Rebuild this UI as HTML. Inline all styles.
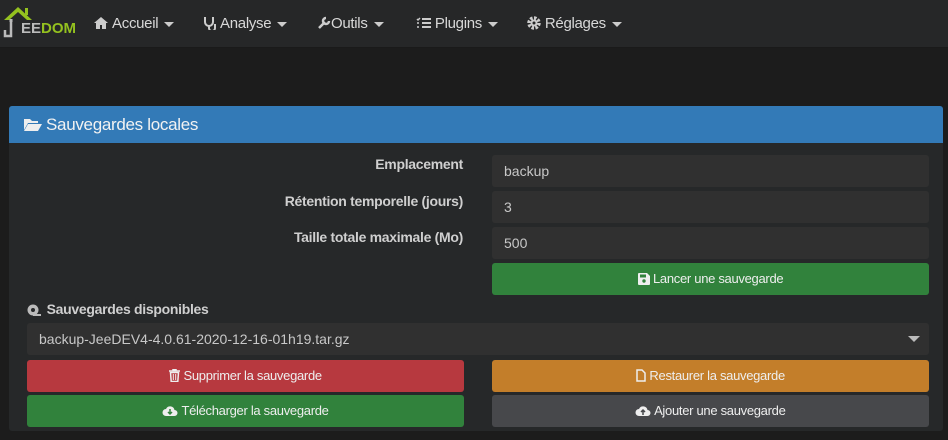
<!DOCTYPE html>
<html><head><meta charset="utf-8"><style>
*{box-sizing:border-box;margin:0;padding:0}
body{width:948px;height:440px;overflow:hidden;background:#1c1c1c;font-family:"Liberation Sans",sans-serif;color:#ddd;position:relative}
.nav{position:absolute;left:0;top:0;width:948px;height:48px;background:#262728;border-bottom:1px solid #1a1a1a}
.ni{position:absolute;top:15px;font-size:15px;color:#d8d8d8;white-space:nowrap;letter-spacing:-0.3px}
.caret{display:inline-block;width:0;height:0;border-left:5px solid transparent;border-right:5px solid transparent;border-top:5px solid #ccc;vertical-align:middle;margin-left:6px}
.panel{position:absolute;left:9px;top:106px;width:934px;height:325px;background:#262829;border-radius:3px}
.ph{height:37px;background:#337ab7;border-radius:3px 3px 0 0;color:#f2f2f2;font-size:17px;padding:9px 0 0 37px;position:relative;letter-spacing:-0.3px}
.lbl{position:absolute;right:480px;font-size:14px;font-weight:bold;color:#cfcfcf;letter-spacing:-0.3px}
.inp{position:absolute;left:483px;width:437px;height:32px;background:#303030;border-radius:3px;color:#c8c8c8;font-size:14px;padding:8px 0 0 12px}
.btn{position:absolute;height:32px;border-radius:3px;color:#eee;font-size:13px;text-align:center;padding-top:8px;letter-spacing:-0.3px}
svg{vertical-align:-2px}
</style></head><body>
<div class="nav">
 <svg style="position:absolute;left:3px;top:4px" width="30" height="34" viewBox="0 0 30 34"><path d="M1 16 L15 3 L29 16 L24 16 L15 8 L6 16Z" fill="#94c11f"/><rect x="22" y="4" width="3" height="7" fill="#94c11f"/><path d="M8 17 v15 h-6 v-6" stroke="#bbb" stroke-width="2.5" fill="none"/><rect x="6.5" y="15" width="3" height="3" fill="#bbb"/></svg>
 <div style="position:absolute;left:21px;top:20px;font-size:15px;font-weight:bold;letter-spacing:0"><span style="color:#bbb">EE</span><span style="color:#94c11f">DOM</span></div>
 <div class="ni" style="left:93px"><svg width="16" height="14" viewBox="0 0 16 14"><path d="M8 1 L1 7 h2 v6 h4 v-4 h2 v4 h4 v-6 h2Z" fill="#ccc"/></svg> Accueil<span class="caret"></span></div>
 <div class="ni" style="left:203px"><svg width="14" height="14" viewBox="0 0 14 14"><path d="M2 1 v5 a4 4 0 0 0 8 0 v-5 M6 10 v2 a3 3 0 0 0 6 0 v-4" stroke="#ccc" stroke-width="2" fill="none"/></svg> Analyse<span class="caret"></span></div>
 <div class="ni" style="left:317px"><svg width="14" height="14" viewBox="0 0 14 14"><path d="M2 12 L8 6 M9 2 a3 3 0 1 0 3 3" stroke="#ccc" stroke-width="2.5" fill="none"/></svg>Outils<span class="caret"></span></div>
 <div class="ni" style="left:416px"><svg width="15" height="14" viewBox="0 0 15 14"><path d="M6 3h9M6 7h9M6 11h9" stroke="#ccc" stroke-width="2"/><path d="M1 3l1 1 2-2M1 7h2M1 11h2" stroke="#ccc" stroke-width="1.5" fill="none"/></svg> Plugins<span class="caret"></span></div>
 <div class="ni" style="left:527px"><svg width="14" height="14" viewBox="0 0 14 14"><circle cx="7" cy="7" r="5" fill="none" stroke="#ccc" stroke-width="3.5" stroke-dasharray="2.5 1.4"/><circle cx="7" cy="7" r="3.5" fill="#ccc"/><circle cx="7" cy="7" r="1.5" fill="#262728"/></svg> Réglages<span class="caret"></span></div>
</div>
<div class="panel">
 <div class="ph"><svg style="position:absolute;left:15px;top:12px" width="18" height="14" viewBox="0 0 18 14"><path d="M0 1h6l2 2h6v2H4L0 12Z M4 6h14l-4 7H0Z" fill="#eee"/></svg>Sauvegardes locales</div>
 <div class="lbl" style="top:50px">Emplacement</div>
 <div class="lbl" style="top:87px">Rétention temporelle (jours)</div>
 <div class="lbl" style="top:123px">Taille totale maximale (Mo)</div>
 <div class="inp" style="top:49px">backup</div>
 <div class="inp" style="top:85px">3</div>
 <div class="inp" style="top:121px">500</div>
 <div class="btn" style="left:483px;top:157px;width:437px;background:#31823c"><svg width="12" height="12" viewBox="0 0 12 12"><path d="M0 1a1 1 0 0 1 1-1h8l3 3v8a1 1 0 0 1-1 1H1a1 1 0 0 1-1-1Z" fill="#eee"/><rect x="2" y="1.5" width="6" height="3" fill="#31823c"/><circle cx="6" cy="8" r="1.7" fill="#31823c"/></svg> Lancer une sauvegarde</div>
 <div style="position:absolute;left:18px;top:195px;font-size:14px;font-weight:bold;color:#cfcfcf;letter-spacing:-0.3px"><svg width="16" height="12" viewBox="0 0 16 12"><circle cx="6" cy="6" r="5.5" fill="#bbb"/><circle cx="6" cy="6" r="2" fill="#262829"/><rect x="6" y="10" width="8" height="2" fill="#bbb"/></svg> Sauvegardes disponibles</div>
 <div class="inp" style="left:18px;width:902px;top:217px;padding-left:12px">backup-JeeDEV4-4.0.61-2020-12-16-01h19.tar.gz<span style="position:absolute;right:9px;top:13px;border-left:6px solid transparent;border-right:6px solid transparent;border-top:6px solid #bbb"></span></div>
 <div class="btn" style="left:18px;top:254px;width:437px;background:#b7393f"><svg width="11" height="13" viewBox="0 0 11 13"><path d="M0 2h11M4 2V0.5h3V2" stroke="#eee" stroke-width="1.5" fill="none"/><path d="M1.5 3.5h8l-.7 9h-6.6Z" fill="none" stroke="#eee" stroke-width="1.5"/><path d="M4.3 5v6M6.7 5v6" stroke="#eee" stroke-width="1"/></svg> Supprimer la sauvegarde</div>
 <div class="btn" style="left:483px;top:254px;width:437px;background:#c37e2a"><svg width="10" height="13" viewBox="0 0 10 13"><path d="M1 1h5l3 3v8H1Z" fill="none" stroke="#eee" stroke-width="1.5"/></svg> Restaurer la sauvegarde</div>
 <div class="btn" style="left:18px;top:289px;width:437px;background:#31823c"><svg width="16" height="12" viewBox="0 0 16 12"><path d="M4 11a3.5 3.5 0 0 1 0-7 4.5 4.5 0 0 1 8.5 1 3 3 0 0 1 0 6Z" fill="#eee"/><path d="M8 4v5M6 7l2 2 2-2" stroke="#31823c" stroke-width="1.5" fill="none"/></svg> Télécharger la sauvegarde</div>
 <div class="btn" style="left:483px;top:289px;width:437px;background:#47484b"><svg width="16" height="12" viewBox="0 0 16 12"><path d="M4 11a3.5 3.5 0 0 1 0-7 4.5 4.5 0 0 1 8.5 1 3 3 0 0 1 0 6Z" fill="#eee"/><path d="M8 10V5M6 7l2-2 2 2" stroke="#47484b" stroke-width="1.5" fill="none"/></svg> Ajouter une sauvegarde</div>
</div>
</body></html>
